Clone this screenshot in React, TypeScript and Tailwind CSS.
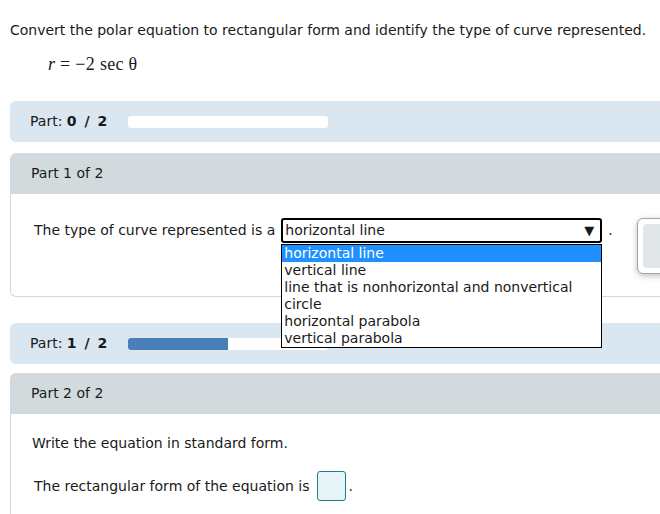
import React from "react";

const options = [
  "horizontal line",
  "vertical line",
  "line that is nonhorizontal and nonvertical",
  "circle",
  "horizontal parabola",
  "vertical parabola",
];

function PartBar({ done }: { done: number }) {
  return (
    <div className="flex h-[41px] items-center rounded-l-md bg-[#dae6f0] pl-5">
      <span className="w-[98px] text-[#1a1a1a]">
        Part: <b className="tracking-[1.5px]">{done} / 2</b>
      </span>
      <div className="h-[12px] w-[200px] overflow-hidden rounded-[3px] bg-white">
        <div className="h-full bg-[#4a7eb6]" style={{ width: `${(done / 2) * 100}%` }} />
      </div>
    </div>
  );
}

export default function App() {
  return (
    <div
      className="h-[514px] w-[660px] overflow-hidden bg-white text-[14px] text-[#1a1a1a]"
      style={{ fontFamily: '"DejaVu Sans", Verdana, sans-serif' }}
    >
      <p className="whitespace-nowrap pl-[10px] pt-[20px] leading-[20px]">
        Convert the polar equation to rectangular form and identify the type of curve represented.
      </p>
      <div
        className="pl-[48px] pt-[13px] text-[18px] leading-[22px] tracking-[0.3px]"
        style={{ fontFamily: '"Liberation Serif", "Times New Roman", serif' }}
      >
        <i>r</i> = −2 sec θ
      </div>

      <div className="ml-[10px] w-[700px] pt-[26px]">
        <PartBar done={0} />

        <div className="mt-[11px] rounded-t-md bg-[#d3dadd] pl-[21px] leading-[41px]">Part 1 of 2</div>
        <div className="h-[103px] rounded-bl-md border-b border-l border-[#d3dadd] pl-[23px] pt-[24px]">
          <div className="flex items-start">
            <span className="leading-[25px]">The type of curve represented is a</span>
            <div className="relative ml-[6px]">
              <div className="flex h-[25px] w-[321px] items-center justify-between rounded-[3px] border-2 border-black pl-[2px] pr-[6px]">
                <span>horizontal line</span>
                <span className="text-[13px]">▼</span>
              </div>
              <ul className="absolute left-0 top-[26px] z-10 w-[321px] border border-black bg-white leading-[17px]">
                {options.map((o, i) => (
                  <li key={o} className={i === 0 ? "bg-[#1e90ff] pl-[2px] text-white" : "pl-[2px]"}>
                    {o}
                  </li>
                ))}
              </ul>
            </div>
            <span className="ml-[6px] leading-[25px]">.</span>
            <div className="ml-[24px] h-[56px] w-[60px] rounded-md border border-[#9aa8ab] bg-white p-[5px] shadow-[0_2px_6px_rgba(0,0,0,0.25)]">
              <div className="h-full w-full rounded-sm bg-[#e1e7e9]" />
            </div>
          </div>
        </div>

        <div className="mt-[26px]">
          <PartBar done={1} />
        </div>

        <div className="mt-[9px] rounded-t-md bg-[#d3dadd] pl-[21px] leading-[41px]">Part 2 of 2</div>
        <div className="h-[120px] border-l border-[#d3dadd] pl-[21px] pt-[19px]">
          <p className="leading-[20px]">Write the equation in standard form.</p>
          <div className="mt-[18px] flex items-center pl-[2px]">
            <span>The rectangular form of the equation is</span>
            <div className="ml-[7px] h-[30px] w-[29px] rounded-[3px] border border-[#1f7f8c] bg-[#e6f4f8]" />
            <span className="ml-[3px]">.</span>
          </div>
        </div>
      </div>
    </div>
  );
}
